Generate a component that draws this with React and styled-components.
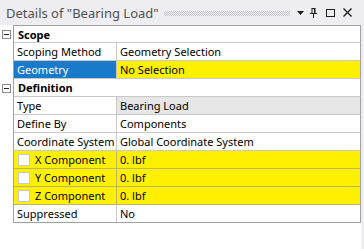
import React from 'react';
import styled, { createGlobalStyle } from 'styled-components';

const Global = createGlobalStyle`
  html, body { margin: 0; padding: 0; background: #ffffff; }
  body { font-family: "Noto Sans", "Liberation Sans", sans-serif; }
`;

const Panel = styled.div`
  width: 364px;
  height: 249px;
  display: flex;
  flex-direction: column;
  background: #ffffff;
  border-right: 3px solid #eeeef2;
  box-sizing: border-box;
  overflow: hidden;
`;

const TitleBar = styled.div`
  height: 25px;
  flex: none;
  display: flex;
  align-items: center;
  padding: 0 9px 0 6px;
  gap: 5px;
  background: #eeeef2;
  box-sizing: border-box;
`;

const Title = styled.span`
  font-size: 13px;
  color: #505050;
  white-space: nowrap;
`;

const Grip = styled.div`
  flex: 1;
  height: 5px;
  margin: 1px 2px 0 0;
  background: repeating-conic-gradient(#c6c6ce 0 25%, transparent 0 50%) 0 0 / 2px 2px;
`;

const Tools = styled.div`
  display: flex;
  align-items: center;
  color: #1e1e1e;
  & > svg:nth-child(2) { margin-left: 6px; }
  & > svg:nth-child(3) { margin-left: 9px; }
  & > svg:nth-child(4) { margin-left: 8px; }
`;

const Grid = styled.div`
  display: grid;
  grid-template-columns: 13px 104px 1fr;
  grid-auto-rows: 18px;
  font-size: 11px;
  color: #000;
`;

const Gutter = styled.div`
  display: flex;
  align-items: center;
  justify-content: center;
  padding-right: 1px;
  background: #ffffff;
`;

const Toggle = styled.span`
  width: 7px;
  height: 7px;
  border: 1px solid #8a8a8a;
  position: relative;
  background: #fff;
  &::after {
    content: '';
    position: absolute;
    left: 1px;
    right: 1px;
    top: 3px;
    height: 1px;
    background: #222;
  }
`;

const Group = styled.div`
  grid-column: 2 / 4;
  display: flex;
  align-items: center;
  padding-left: 4px;
  font-weight: 700;
  border-left: 1px solid #a0a0a0;
  border-top: ${p => (p.$first ? '1px solid #a0a0a0' : 'none')};
  border-bottom: 1px solid #c8c8c8;
  border-right: 1px solid #a0a0a0;
`;

const Cell = styled.div`
  display: flex;
  align-items: center;
  gap: 5px;
  padding-left: 3px;
  white-space: nowrap;
  overflow: hidden;
  background: ${p => p.$bg};
  color: ${p => p.$fg || '#000'};
  border-bottom: 1px solid ${p => p.$line};
  border-left: ${p => (p.$label ? '1px solid #a0a0a0' : 'none')};
  border-right: 1px solid ${p => (p.$label ? p.$line : '#a0a0a0')};
  ${p => p.$last && 'border-bottom-color: #a0a0a0;'}
`;

const Check = styled.span`
  width: 10px;
  height: 10px;
  flex: none;
  margin-left: 1px;
  background: #ffffff;
  border: 1px solid #c8c8c8;
`;

const PinIcon = () => (
  <svg width="7" height="10" viewBox="0 0 7 10">
    <path d="M1.5 0.5h4M2 0.5v5M5 0.5v5M0 5.5h7M3.5 5.5v4.5" stroke="#1e1e1e" strokeWidth="1" fill="none" />
    <rect x="4" y="1" width="1" height="4.5" fill="#1e1e1e" />
  </svg>
);

const Caret = () => (
  <svg width="7" height="4" viewBox="0 0 7 4">
    <path d="M0 0h7L3.5 4z" fill="#1e1e1e" />
  </svg>
);

const Square = () => (
  <svg width="9" height="8" viewBox="0 0 9 8">
    <rect x="0.5" y="0.5" width="8" height="7" fill="none" stroke="#1e1e1e" strokeWidth="1" />
  </svg>
);

const Close = () => (
  <svg width="9" height="9" viewBox="0 0 9 9">
    <path d="M0.5 0.5l8 8M8.5 0.5l-8 8" stroke="#1e1e1e" strokeWidth="1.4" />
  </svg>
);

const YELLOW = '#fff000';
const BLUE = '#1979ca';

const sections = [
  {
    name: 'Scope',
    rows: [
      { label: 'Scoping Method', value: 'Geometry Selection' },
      { label: 'Geometry', value: 'No Selection', labelBg: BLUE, labelFg: '#ffffff', valueBg: YELLOW },
    ],
  },
  {
    name: 'Definition',
    rows: [
      { label: 'Type', value: 'Bearing Load', valueBg: '#e6e6e6' },
      { label: 'Define By', value: 'Components' },
      { label: 'Coordinate System', value: 'Global Coordinate System' },
      { label: 'X Component', value: '0. lbf', check: true },
      { label: 'Y Component', value: '0. lbf', check: true },
      { label: 'Z Component', value: '0. lbf', check: true },
      { label: 'Suppressed', value: 'No' },
    ],
  },
];

export default function App() {
  return (
    <>
      <Global />
      <Panel>
        <TitleBar>
          <Title>Details of "Bearing Load"</Title>
          <Grip />
          <Tools>
            <Caret />
            <PinIcon />
            <Square />
            <Close />
          </Tools>
        </TitleBar>
        <Grid>
          {sections.map((s, si) => (
            <React.Fragment key={s.name}>
              <Gutter><Toggle /></Gutter>
              <Group $first={si === 0}>{s.name}</Group>
              {s.rows.map((r, ri) => {
                const last = si === sections.length - 1 && ri === s.rows.length - 1;
                const yellow = r.check;
                const line = yellow ? '#bdb46a' : '#c8c8c8';
                return (
                  <React.Fragment key={r.label}>
                    <Gutter />
                    <Cell $label $bg={r.labelBg || (yellow ? YELLOW : '#ffffff')} $fg={r.labelFg} $line={line} $last={last}>
                      {r.check && <Check />}
                      {r.label}
                    </Cell>
                    <Cell $bg={r.valueBg || (yellow ? YELLOW : '#ffffff')} $line={line} $last={last}>
                      {r.value}
                    </Cell>
                  </React.Fragment>
                );
              })}
            </React.Fragment>
          ))}
        </Grid>
      </Panel>
    </>
  );
}
